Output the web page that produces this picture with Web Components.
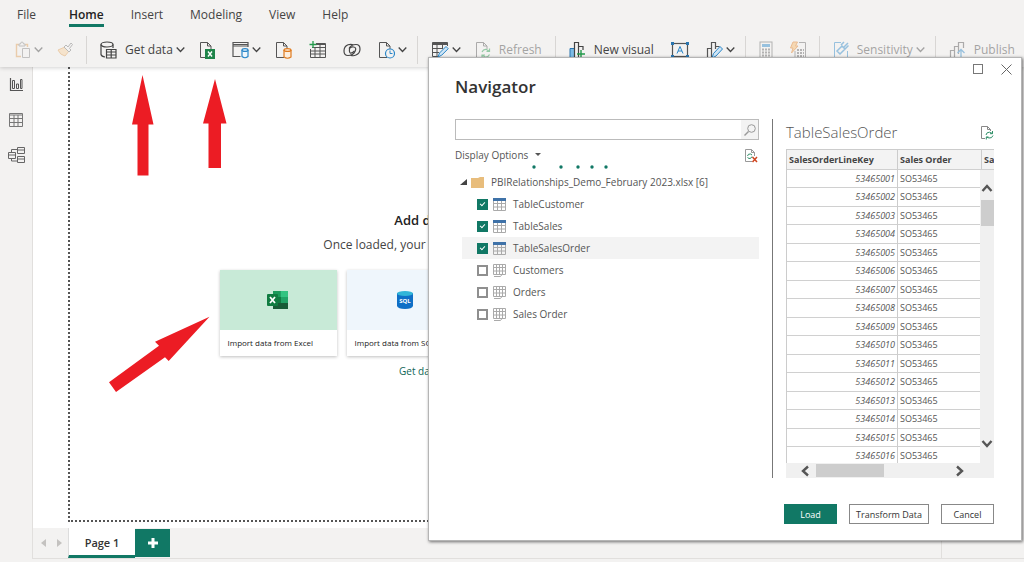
<!DOCTYPE html>
<html lang="en">
<head>
<meta charset="utf-8">
<title>Report editor</title>
<style>
  html, body { margin: 0; height: 100%; }
  body { font-family: "Open Sans", "Noto Sans", sans-serif; font-size: 12px; color: #444; background: #f3f2f1; overflow: hidden; }
</style>
</head>
<body>
<report-app></report-app>
<script>
const define = (name, html, setup) => {
  const tpl = document.createElement('template');
  tpl.innerHTML = html;
  customElements.define(name, class extends HTMLElement {
    connectedCallback() {
      if (this.shadowRoot) return;
      const root = this.attachShadow({ mode: 'open' });
      root.append(tpl.content.cloneNode(true));
      if (setup) setup(this, root);
    }
  });
};

/* ---------- icons: [width, height, drawing] ---------- */
const doc = '<path d="M9 16.500H1.500V1.500H8.500L12 5V8M8.500 1.500V5H12" fill="none" stroke="#555"/>';
const ICONS = {
  paste: [16, 18, '<path d="M6 15.500H1.500V3.500H4M10 3.500H12.500V6" fill="none" stroke="#e0a058" stroke-width="1.400"/><path d="M4 5V3H5.500Q5.500 1 7 1T8.500 3H10V5ZM7.500 7.500H14.500V16.500H7.500Z" fill="#f3f2f1" stroke="#888"/>'],
  brush: [16, 18, '<path d="M1 9 8 6 12 10 8 15Q3 14 1 9Z" fill="#f8d3a0" stroke="#e0a058"/><path d="M7 6 9 4 11 6 14 2 15.500 3.500 12.500 7.500 14 9 12 11Z" fill="#f3f2f1" stroke="#777"/>'],
  getdata: [17, 18, '<g fill="none" stroke="#444" stroke-width="1.200"><ellipse cx="7" cy="3.500" rx="6" ry="2.500"/><path d="M1 3.500V13.500Q1.500 15.500 5 16M13 3.500V7"/><path d="M6.500 8.500H16V17H6.500ZM6.500 11H16M6.500 14H16M11.200 8.500V17"/></g>'],
  exceldoc: [16, 18, doc + '<rect x="6" y="8" width="10" height="10" fill="#1e8449"/><path d="M9 10.500 13 15.500M13 10.500 9 15.500" stroke="#fff" stroke-width="1.400"/>'],
  windowdb: [17, 18, '<path d="M8.500 15.500H1V1.500H16V6M1 5H16M1 3.500H16" fill="none" stroke="#555" stroke-width="1.200"/><path d="M10 9V15.500Q13 18 16 15.500V9" fill="#eef6fc" stroke="#2a86c8" stroke-width="1.200"/><ellipse cx="13" cy="9" rx="3" ry="1.400" fill="#eef6fc" stroke="#2a86c8" stroke-width="1.200"/>'],
  docdb: [17, 18, doc + '<path d="M9 9V16Q12.500 18.500 16 16V9" fill="#fdeedd" stroke="#e07b1e" stroke-width="1.200"/><ellipse cx="12.500" cy="9" rx="3.500" ry="1.400" fill="#fdeedd" stroke="#e07b1e" stroke-width="1.200"/>'],
  tableplus: [17, 18, '<path d="M7 2.500H16.500V16.500H1.500V8M7 3.500H16.500M3 6.500H16.500M1.500 10H16.500M1.500 13H16.500M6 6V16.500M11 3V16.500" fill="none" stroke="#555"/><path d="M4 0V7M.5 3.500H7.500" stroke="#239a4b" stroke-width="1.300"/>'],
  swirl: [18, 18, '<g fill="none" stroke="#444" stroke-width="1.200"><path d="M5 3.800Q1 5.500 1 10T5 14.500Q10 14.500 12 10.500T10.500 6 6.500 8 7 12"/><path d="M13 14Q17 12.500 17 8T13 3.500Q8 3.500 6 7.500M5 3.800Q8 2.800 10 3.800M13 14Q10 15.500 7.500 14M7 12Q9 12.500 11.500 10"/></g>'],
  docclock: [17, 18, doc + '<circle cx="12" cy="12.500" r="4.500" fill="#f3f2f1" stroke="#2a86c8" stroke-width="1.200"/><path d="M12 9.500V12.500H14.500" fill="none" stroke="#2a86c8"/>'],
  tablepen: [18, 18, '<path d="M7 15.500H1.500V1.500H16.500V5M1.500 3.500H16.500M1.500 7.500H12M1.500 11.500H8M6 4V15.500M11.500 4V8" fill="none" stroke="#555"/><path d="M1.500 2.500H16.500" stroke="#555" stroke-width="2"/><path d="M7 16 8.500 12 15 5.500 17.200 7.700 10.700 14.200Z" fill="#cfe5f5" stroke="#2a86c8"/>'],
  docrefresh: [16, 18, doc + '<path d="M7 11Q8.500 8 11.500 8.500L14.500 10.500M14.500 7.500V10.500H11.500M14.500 13.500Q13 16.500 10 16L7 14M7 17V14H10" fill="none" stroke="#239a4b" stroke-width="1.200"/>'],
  visual: [17, 18, '<path d="M1 17V7.500H5.500V17Z" fill="#7dbbe6" stroke="#2a76b0"/><path d="M5.500 17V1.500H9.500V17M9.500 5.500H14V9" fill="none" stroke="#444" stroke-width="1.200"/><path d="M12 9V17M8 13H16" stroke="#239a4b" stroke-width="1.400"/>'],
  textbox: [18, 18, '<rect x="1.500" y="2.500" width="15" height="13" fill="none" stroke="#555" stroke-width="1.200"/><path d="M6 12.500 9 5.500 12 12.500M7 10H11" fill="none" stroke="#2a86c8"/><g fill="#2a76b0"><path d="M0 1h3v3H0zM15 1h3v3h-3zM0 14h3v3H0zM15 14h3v3h-3z"/></g>'],
  shapes: [17, 18, '<path d="M1.500 17V7.500H5.500M5.500 17V1.500H9.500V8M10 5.500H13.500" fill="none" stroke="#555" stroke-width="1.200"/><path d="M6 17 7.500 12.500 14 5.500 16.500 8 10 15Z" fill="#cfe5f5" stroke="#2a86c8"/>'],
  calc: [14, 18, '<rect x="1" y="1" width="12" height="16" fill="none" stroke="#666"/><path d="M3 4.500H11" stroke="#2a86c8" stroke-width="3"/><path d="M3 8.500H11M3 11.500H11M3 14.500H11" stroke="#666" stroke-width="2" stroke-dasharray="2 1"/>'],
  quick: [16, 18, '<path d="M9 1.500H15.500V16.500H5V10" fill="none" stroke="#666"/><path d="M7 9H14M7 12H14M7 15H14" stroke="#666" stroke-width="2" stroke-dasharray="2 1"/><path d="M3 1H7.500L5.500 5H8L1.500 12 3 7H.5Z" fill="#f8b96a" stroke="#e07b1e"/>'],
  sensitivity: [16, 18, '<path d="M8 1.500H1.500V16.500H14.500V10" fill="none" stroke="#2a86c8"/><path d="M4 10 9 5 12 8 7 13ZM8 4 11 1M11 6 15 2M12.500 7.500 15.500 4.500" fill="none" stroke="#2a86c8" stroke-width="1.500"/>'],
  publish: [17, 18, '<path d="M1.500 16.500V9.500H5.500V16.500ZM5.500 9V5.500H9.500V13M9.500 6V1.500H14.500V7" fill="none" stroke="#555" stroke-width="1.200"/><path d="M12 17V9M8.500 12 12 8.500 15.500 12" fill="none" stroke="#2a86c8" stroke-width="1.300"/>'],
  chevron: [9, 18, '<path d="M.7 6.500 4.500 10.500 8.300 6.500" fill="none" stroke="#444" stroke-width="1.300"/>'],
  report: [16, 16, '<path d="M2.500 1V13.500H15" fill="none" stroke="#555" stroke-width="1.200"/><path d="M4.500 3.500H6.500V11.500H4.500ZM8.500 7H10.500V11.500H8.500ZM12.500 2.500H14V11.500H12.500Z" fill="none" stroke="#555"/>'],
  data: [16, 16, '<path d="M1.500 1.500H14.500V14.500H1.500ZM1.500 3H14.500M1.500 6.500H14.500M1.500 10.500H14.500M6 3V14.500M10 3V14.500" fill="none" stroke="#777"/>'],
  model: [18, 18, '<g fill="none" stroke="#666"><path d="M10.500 1.500H17.500V7.500H10.500ZM10.500 4H17.500M10.500 10.500H17.500V16.500H10.500ZM10.500 13H17.500M1.500 6.500H8.500V12.500H1.500ZM1.500 9H8.500M4.500 6.500V3.500H10.500M4.500 12.500V15H10.500"/></g>'],
  excel: [22, 20, '<path d="M6 1H21V19H6Z" fill="#21a366"/><path d="M6 1H13V7H6Z" fill="#1b9a5a"/><path d="M14 1H21V7H14Z" fill="#33c481"/><path d="M6 7H14V13H6Z" fill="#107c41"/><path d="M6 13H21V19H6Z" fill="#185c37"/><rect y="4" width="11" height="12" rx="1" fill="#107c41"/><path d="M3 7 8 13M8 7 3 13" stroke="#fff" stroke-width="1.800"/>'],
  sql: [16, 20, '<path d="M0 3V16Q1 19 8 19T16 16V3Z" fill="#0f6fc6"/><ellipse cx="8" cy="3.500" rx="8" ry="2.500" fill="#32b5d8"/><text x="8" y="13" font-size="6" font-weight="700" text-anchor="middle" fill="#fff">SQL</text>'],
  search: [14, 14, '<circle cx="8.500" cy="5.500" r="3.800" fill="none" stroke="#999"/><path d="M5.500 8.500 1.500 12.500" stroke="#999" stroke-width="1.500"/>'],
  docx: [14, 15, '<path d="M8 13.500H1.500V1.500H7.500L10.500 4.500V8M7.500 1.500V4.500H10.500" fill="none" stroke="#999"/><path d="M3.500 8Q4 5.500 6.500 6L8 7M8 8.500Q7 11 5 10.500L3.500 9.500" fill="none" stroke="#2f8f68"/><path d="M8.500 9 13 14M13 9 8.500 14" stroke="#cf4520" stroke-width="1.500"/>'],
  docsync: [14, 15, '<path d="M5 13.500H1.500V1.500H7.500L10.500 4.500V6M7.500 1.500V4.500H10.500" fill="none" stroke="#888"/><path d="M6 10Q6.500 7 9.500 7.200L12.500 8.500M12.500 6V8.700H10M13 10.500Q12 13.500 9 13L6.500 12M6.300 14.500V12H8.500" fill="none" stroke="#2f8f68"/>'],
  folder: [14, 12, '<path d="M0 2H7L9 1H13V12H0Z" fill="#e8bd7c"/>'],
  table: [13, 13, '<path d="M.5 .5H12.500V12.500H.500ZM.5 5.500H12.500M.5 9H12.500M4.500 3V12.500M8.500 3V12.500" fill="none" stroke="#aaa"/><path d="M0 1.500H13" stroke="#3f72a8" stroke-width="3"/>'],
  sheet: [13, 13, '<path d="M.5 10.500V.5H12.500V10.500ZM.5 3.500H12.500M.5 7H12.500M3.500 .5V10.500M6.500 .5V10.500M9.500 .5V10.500M1 12.500H7.500L9 10.500" fill="none" stroke="#aaa"/>'],
  max: [11, 11, '<rect x=".5" y=".5" width="9" height="9" fill="none" stroke="#777"/>'],
  close: [11, 11, '<path d="M.5 .5 10.500 10.500M10.500 .5 .5 10.500" stroke="#666"/>'],
  arrow: [12, 10, '<path d="M1.500 8 6 3 10.500 8" fill="none" stroke="#555" stroke-width="2.400"/>']
};
define('app-icon', '<style>:host{display:inline-flex;flex:none}svg{display:block}text{font-family:"Open Sans",sans-serif}</style>', (el, root) => {
  const [w, h, d] = ICONS[el.getAttribute('name')];
  root.innerHTML += `<svg width="${w}" height="${h}" viewBox="0 0 ${w} ${h}" aria-hidden="true">${d}</svg>`;
});

/* ---------- ribbon ---------- */
define('ribbon-tab', `<style>
  :host{display:block}
  button{font:inherit;line-height:18px;color:#444;background:none;border:0;border-bottom:3px solid transparent;padding:6px 0 0;display:block}
  :host([selected]) button{font-weight:600;color:#222;border-color:#117865}
</style><button><slot></slot></button>`);

define('ribbon-tool', `<style>
  :host{display:block;flex:none}
  button{font:inherit;line-height:18px;color:inherit;background:none;border:0;padding:0 6px;display:flex;align-items:center;gap:3px}
  :host([menu]) button{padding-right:3px}
  span{margin-left:5px;white-space:nowrap}
  :host([disabled]) button{opacity:.45}
</style><button></button>`, (el, root) => {
  const b = root.querySelector('button');
  b.setAttribute('aria-label', el.getAttribute('label'));
  b.disabled = el.hasAttribute('disabled');
  b.innerHTML = `<app-icon name="${el.getAttribute('icon')}"></app-icon>`
    + (el.hasAttribute('text') ? `<span>${el.getAttribute('label')}</span>` : '')
    + (el.hasAttribute('menu') ? '<app-icon name="chevron"></app-icon>' : '');
});

define('app-ribbon', `<style>
  :host{display:block;flex:none;position:relative;background:#f3f2f1;box-shadow:0 1px 4px rgba(0,0,0,.18)}
  nav{display:flex;align-items:flex-start;gap:27px;height:33px;padding-left:17px}
  nav ribbon-tab:first-child{margin-right:6px}
  .tools{display:flex;align-items:center;gap:5px;height:34px;padding-left:9px;overflow:hidden}
  i{flex:none;width:1px;height:28px;margin:0 2px;background:#d8d6d4}
</style>
<nav><ribbon-tab>File</ribbon-tab><ribbon-tab selected>Home</ribbon-tab><ribbon-tab>Insert</ribbon-tab><ribbon-tab>Modeling</ribbon-tab><ribbon-tab>View</ribbon-tab><ribbon-tab>Help</ribbon-tab></nav>
<div class="tools">
  <ribbon-tool icon="paste" label="Paste" menu disabled></ribbon-tool>
  <ribbon-tool icon="brush" label="Format painter" disabled></ribbon-tool><i></i>
  <ribbon-tool icon="getdata" label="Get data" text menu></ribbon-tool>
  <ribbon-tool icon="exceldoc" label="Excel workbook"></ribbon-tool>
  <ribbon-tool icon="windowdb" label="Data hub" menu></ribbon-tool>
  <ribbon-tool icon="docdb" label="SQL Server"></ribbon-tool>
  <ribbon-tool icon="tableplus" label="Enter data"></ribbon-tool>
  <ribbon-tool icon="swirl" label="Dataverse"></ribbon-tool>
  <ribbon-tool icon="docclock" label="Recent sources" menu></ribbon-tool><i></i>
  <ribbon-tool icon="tablepen" label="Transform data" menu></ribbon-tool>
  <ribbon-tool icon="docrefresh" label="Refresh" text disabled></ribbon-tool><i></i>
  <ribbon-tool icon="visual" label="New visual" text></ribbon-tool>
  <ribbon-tool icon="textbox" label="Text box"></ribbon-tool>
  <ribbon-tool icon="shapes" label="More visuals" menu></ribbon-tool><i></i>
  <ribbon-tool icon="calc" label="New measure" disabled></ribbon-tool>
  <ribbon-tool icon="quick" label="Quick measure" disabled></ribbon-tool><i></i>
  <ribbon-tool icon="sensitivity" label="Sensitivity" text menu disabled></ribbon-tool><i></i>
  <ribbon-tool icon="publish" label="Publish" text disabled></ribbon-tool>
</div>`);

/* ---------- left rail ---------- */
define('view-rail', `<style>
  :host{display:flex;flex-direction:column;flex:none;width:32px;background:#f3f2f1;border-right:1px solid #e1dfdd}
  button{display:flex;align-items:center;justify-content:center;height:35px;padding:0;border:0;background:none}
</style>
<button aria-label="Report view"><app-icon name="report"></app-icon></button>
<button aria-label="Data view"><app-icon name="data"></app-icon></button>
<button aria-label="Model view"><app-icon name="model"></app-icon></button>`);

/* ---------- canvas ---------- */
define('source-card', `<style>
  :host{display:block;flex:none;width:117px}
  button{font:inherit;font-size:8px;font-weight:500;color:#222;display:block;width:100%;padding:0;border:0;background:#fff;text-align:left;box-shadow:0 1px 3px rgba(0,0,0,.25)}
  .art{display:flex;align-items:center;justify-content:center;height:60px;background:var(--tint,#eff6fc)}
  .name{display:block;height:26px;line-height:26px;padding:0 8px;white-space:nowrap}
</style><button><span class="art"><slot name="icon"></slot></span><span class="name"><slot></slot></span></button>`);

define('report-canvas', `<style>
  :host{display:flex;flex:1;min-width:0;background:#fff}
  section{flex:1;min-width:0;display:flex;flex-direction:column;align-items:center;justify-content:center;margin:0 72px 6px 35px;border:2px dotted #555;border-top:0;white-space:nowrap}
  h2{margin:0;font-size:13px;line-height:24px;font-weight:600;color:#222}
  p{margin:3px 0 15px;line-height:20px}
  .cards{display:flex;gap:10px}
  .green{--tint:#c8ead7}
  a{margin-top:7px;font-size:10px;line-height:16px;color:#0e6656;text-decoration:none}
</style>
<section>
  <h2>Add data to your report</h2>
  <p>Once loaded, your data will appear in the Data pane</p>
  <div class="cards">
    <source-card class="green"><app-icon slot="icon" name="excel"></app-icon>Import data from Excel</source-card>
    <source-card><app-icon slot="icon" name="sql"></app-icon>Import data from SQL</source-card>
    <source-card></source-card>
    <source-card></source-card>
  </div>
  <a href="#">Get data from another source</a>
</section>`);

define('page-tabs', `<style>
  :host{display:flex;align-items:stretch;flex:none;height:30px;padding-left:2px;background:#f3f2f1;border-bottom:1px solid #e1dfdd}
  button{font:inherit;padding:0;border:0;background:none}
  .step{width:16px;display:flex;align-items:center;justify-content:center}
  .step + .step{margin-right:1px}
  .tab{font-size:11px;font-weight:600;color:#333;width:67px;padding-top:2px;background:#fff;border-bottom:3px solid #117865;border-left:1px solid #ddd}
  .add{width:35px;margin:1px 0;background:#117865;display:flex;align-items:center;justify-content:center}
</style>
<button class="step" aria-label="Previous page"><svg width="5" height="8"><path d="M5 0V8L0 4Z" fill="#c4c2c0"/></svg></button>
<button class="step" aria-label="Next page"><svg width="5" height="8"><path d="M0 0V8L5 4Z" fill="#c4c2c0"/></svg></button>
<button class="tab">Page 1</button>
<button class="add" aria-label="New page"><svg width="10" height="10"><path d="M5 0V10M0 5H10" stroke="#fff" stroke-width="3"/></svg></button>`);

/* ---------- navigator dialog ---------- */
define('tree-item', `<style>
  :host{display:block;margin-left:7px}
  :host([selected]){background:#f3f3f3}
  label{display:flex;align-items:center;height:22px;padding-left:15px}
  input{appearance:none;box-sizing:border-box;position:relative;flex:none;width:11px;height:11px;margin:0 5px 0 0;border:2px solid #8f8f8f;background:#fff}
  input:checked{border-color:#117865;background:#117865}
  input:checked::after{content:"";position:absolute;left:2px;top:0;width:2px;height:4px;border:solid #fff;border-width:0 1px 1px 0;transform:rotate(42deg)}
  .name{margin-left:7px}
</style><label><input type="checkbox"><span class="kind"></span><span class="name"><slot></slot></span></label>`, (el, root) => {
  root.querySelector('input').checked = el.hasAttribute('checked');
  const icon = document.createElement('app-icon');
  icon.setAttribute('name', el.getAttribute('kind'));
  root.querySelector('.kind').replaceWith(icon);
});

define('preview-table', `<style>
  :host{display:flex;flex-direction:column;flex:1;min-height:0;position:relative;font-size:9px;color:#555}
  .view{flex:1;min-height:0;overflow:hidden}
  table{width:100%;table-layout:fixed;border-collapse:separate;border-spacing:0;border-left:1px solid #ccc}
  col.key{width:111px} col.order{width:84px}
  th,td{box-sizing:border-box;padding:0 2px;height:18px;line-height:14px;white-space:nowrap;overflow:hidden;text-align:left;border-right:1px solid #ccc;border-bottom:1px solid #d0d0d0}
  tr:nth-child(even) td{height:19px}
  th{height:21px;background:#f3f3f3;border-top:1px solid #ccc;color:#444;font-weight:700}
  th:last-child,td:last-child{border-right:0}
  td:first-child{font-style:italic;text-align:right}
  .v{position:absolute;right:0;top:21px;bottom:15px;width:14px;background:#f0f0f0;display:flex;flex-direction:column;align-items:center;padding:13px 0 14px;box-sizing:border-box}
  .v i{width:13px;height:26px;margin:7px 0 auto;background:#cdcdcd}
  .h{flex:none;height:15px;background:#f0f0f0;display:flex;align-items:center;padding:0 28px 0 13px}
  .h i{width:68px;height:13px;margin:0 auto 0 5px;background:#cdcdcd}
  .down{transform:rotate(180deg)} .left{transform:rotate(-90deg)} .right{transform:rotate(90deg)}
</style>
<div class="view"><table><colgroup><col class="key"><col class="order"><col></colgroup>
<thead><tr><th>SalesOrderLineKey</th><th>Sales Order</th><th>Sa</th></tr></thead><tbody></tbody></table></div>
<div class="v"><app-icon name="arrow"></app-icon><i></i><app-icon class="down" name="arrow"></app-icon></div>
<div class="h"><app-icon class="left" name="arrow"></app-icon><i></i><app-icon class="right" name="arrow"></app-icon></div>`, (el, root) => {
  root.querySelector('tbody').innerHTML = Array.from({ length: 16 }, (_, i) =>
    `<tr><td>${53465001 + i}</td><td>SO53465</td><td></td></tr>`).join('');
});

define('navigator-dialog', `<style>
  :host{display:flex;flex-direction:column;box-sizing:border-box;background:#fff;border:1px solid #b5b5b5;box-shadow:1px 1px 3px rgba(0,0,0,.55);font-size:10px;color:#555}
  button{font:inherit;color:inherit;padding:0;border:0;background:none}
  .bar{display:flex;justify-content:flex-end;gap:17px;padding:3px 9px 0 0}
  .bar button{display:flex;align-items:center;height:16px}
  h1{margin:0 26px;font-size:17px;line-height:20px;font-weight:600;color:#333}
  .body{flex:1;min-height:0;display:grid;grid-template-columns:304fr 1px 208fr;grid-template-rows:minmax(0,1fr);gap:13px;margin:22px 27px 0 26px}
  .rule{background:#777}
  .right{display:flex;flex-direction:column;min-width:0}
  .search{display:flex;height:21px;box-sizing:border-box;border:1px solid #bbb}
  .search input{flex:1;min-width:0;border:0;padding:0 4px;font:inherit;outline:0}
  .search button{width:17px;background:#f3f3f3;display:flex;align-items:center;justify-content:center}
  .opts{display:flex;align-items:center;justify-content:space-between;height:20px;margin-top:5px;padding-right:1px}
  .opts button{display:flex;align-items:center;gap:7px}
  .dots{display:block;margin-left:77px}
  .root{display:flex;align-items:center;height:22px;padding-left:5px}
  .root app-icon{margin:0 6px 0 4px}
  .head{display:flex;justify-content:space-between;align-items:center;height:30px}
  h2{margin:0;font-size:15px;line-height:26px;font-weight:300;align-self:flex-start}
  footer{display:flex;justify-content:flex-end;gap:12px;padding:26px 27px 16px}
  footer button{box-sizing:border-box;height:20px;min-width:53px;padding:0 6px;border:1px solid #888;font-size:9px;color:#333}
  footer .primary{background:#117865;border-color:#117865;color:#fff}
</style>
<div class="bar"><button aria-label="Maximize"><app-icon name="max"></app-icon></button><button aria-label="Close"><app-icon name="close"></app-icon></button></div>
<h1>Navigator</h1>
<div class="body">
  <div class="left">
    <div class="search"><input type="text" aria-label="Search"><button aria-label="Search"><app-icon name="search"></app-icon></button></div>
    <div class="opts"><button>Display Options <svg width="6" height="4"><path d="M0 0H6L3 3Z" fill="#555"/></svg></button><button aria-label="Clear"><app-icon name="docx"></app-icon></button></div>
    <svg class="dots" width="80" height="6" fill="#117865"><circle cx="2" cy="2" r="1.700"/><circle cx="29" cy="2" r="1.700"/><circle cx="46" cy="2" r="1.700"/><circle cx="60" cy="2" r="1.700"/><circle cx="74" cy="2" r="1.700"/></svg>
    <div class="root"><svg width="7" height="7"><path d="M7 0V6H0Z" fill="#444"/></svg><app-icon name="folder"></app-icon><span>PBIRelationships_Demo_February 2023.xlsx [6]</span></div>
    <tree-item kind="table" checked>TableCustomer</tree-item>
    <tree-item kind="table" checked>TableSales</tree-item>
    <tree-item kind="table" checked selected>TableSalesOrder</tree-item>
    <tree-item kind="sheet">Customers</tree-item>
    <tree-item kind="sheet">Orders</tree-item>
    <tree-item kind="sheet">Sales Order</tree-item>
  </div>
  <div class="rule"></div>
  <div class="right">
    <div class="head"><h2>TableSalesOrder</h2><button aria-label="Refresh preview"><app-icon name="docsync"></app-icon></button></div>
    <preview-table></preview-table>
  </div>
</div>
<footer><button class="primary">Load</button><button>Transform Data</button><button>Cancel</button></footer>`);

define('pointer-arrows', `<style>:host{display:block;pointer-events:none}svg{display:block}</style>
<svg width="125" height="325" viewBox="105 70 125 325" fill="#ec1c24">
<path d="M142.500 75 153.500 124.500H148.500V175.500H137.500V124.500H132Z"/>
<path d="M215 79 226.500 123.500H221V168H208.500V123.500H203Z"/>
<path d="M209.500 316.700 168.700 361 165 357.300 116 392 109 382.300 159 345.700 155 341.700Z"/>
</svg>`);

define('report-app', `<style>
  :host{display:flex;flex-direction:column;height:100vh;position:relative}
  .work{flex:1;min-height:0;display:flex}
  .main{flex:1;min-width:0;display:flex;flex-direction:column}
  aside{flex:none;width:82px;border-left:1px solid #e1dfdd;border-bottom:1px solid #e1dfdd;background:#f3f2f1}
  footer{flex:none;height:3px;background:#f3f2f1}
  navigator-dialog{position:absolute;left:41.8%;right:2px;top:57px;bottom:21px}
  pointer-arrows{position:absolute;left:105px;top:70px}
</style>
<app-ribbon></app-ribbon>
<div class="work">
  <view-rail></view-rail>
  <div class="main"><report-canvas></report-canvas><page-tabs></page-tabs></div>
  <aside></aside>
</div>
<footer></footer>
<pointer-arrows></pointer-arrows>
<navigator-dialog></navigator-dialog>`);
</script>
</body>
</html>
